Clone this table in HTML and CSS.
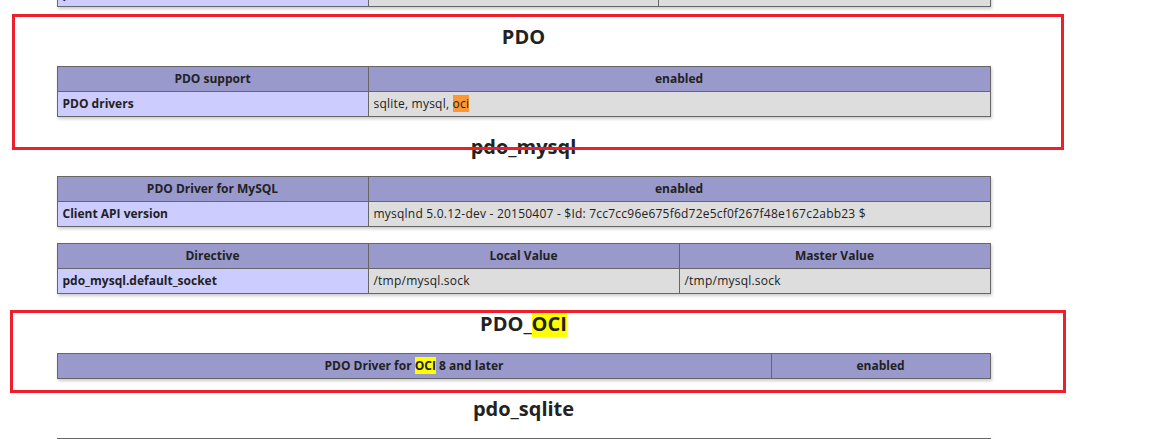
FILE: index.html
```html
<!DOCTYPE html>
<html>
<head>
<meta charset="utf-8">
<title>phpinfo()</title>
<link rel="stylesheet" href="styles.css">
</head>
<body>
<div class="page">
  <div class="center">
    <table class="t-prev">
      <tr><td class="e w-e">pcre.recursion_limit</td><td class="v w-l">100000</td><td class="v">100000</td></tr>
    </table>

    <h2>PDO</h2>
    <table>
      <tr class="h"><th class="w-e">PDO support</th><th>enabled</th></tr>
      <tr><td class="e">PDO drivers</td><td class="v">sqlite, mysql, <span class="hl-active">oci</span></td></tr>
    </table>

    <h2>pdo_mysql</h2>
    <table>
      <tr class="h"><th class="w-e">PDO Driver for MySQL</th><th>enabled</th></tr>
      <tr><td class="e">Client API version</td><td class="v">mysqlnd 5.0.12-dev - 20150407 - $Id: 7cc7cc96e675f6d72e5cf0f267f48e167c2abb23 $</td></tr>
    </table>
    <table>
      <tr class="h"><th class="w-e">Directive</th><th class="w-e">Local Value</th><th>Master Value</th></tr>
      <tr><td class="e">pdo_mysql.default_socket</td><td class="v">/tmp/mysql.sock</td><td class="v">/tmp/mysql.sock</td></tr>
    </table>

    <h2>PDO_<span class="hl">OCI</span></h2>
    <table>
      <tr class="h"><th class="w-oci">PDO Driver for <span class="hl">OCI</span> 8 and later</th><th>enabled</th></tr>
    </table>

    <h2>pdo_sqlite</h2>
    <table>
      <tr class="h"><th class="w-e">PDO Driver for SQLite 3.x</th><th>enabled</th></tr>
      <tr><td class="e">SQLite Library</td><td class="v">3.28.0</td></tr>
    </table>
  </div>
  <div class="mark mark-pdo"></div>
  <div class="mark mark-oci"></div>
</div>
</body>
</html>
```

FILE: styles.css
```css
html, body {
  margin: 0;
  padding: 0;
  background: #fff;
}
body {
  color: #222;
  font-family: "Open Sans", "Noto Sans", "Liberation Sans", sans-serif;
  overflow: hidden;
}
.page {
  position: relative;
  height: 439px;
  overflow: hidden;
}
.center {
  width: 1047px;
  text-align: center;
  margin-top: -35px;
  padding-top: 0;
}
.center table {
  margin: 16px auto;
  text-align: left;
}
table {
  border-collapse: collapse;
  border: 0;
  width: 934px;
  box-shadow: 1px 2px 3px #ccc;
}
td, th {
  border: 1px solid #666;
  font-size: 12px;
  line-height: 16px;
  vertical-align: baseline;
  padding: 4px 5px;
}
th {
  text-align: center;
  font-weight: bold;
}
.h {
  background-color: #99c;
  font-weight: bold;
}
.e {
  background-color: #ccf;
  font-weight: bold;
}
.v {
  background-color: #ddd;
  letter-spacing: 0.22px;
}
.w-e {
  width: 300px;
}
.w-l {
  width: 279px;
}
.w-oci {
  width: 703px;
}
h2 {
  font-size: 20px;
  line-height: 26px;
  font-weight: bold;
  margin: 16.5px 0;
}
.hl {
  background: #ff0;
}
.hl-active {
  background: #ff9632;
}
.mark {
  position: absolute;
  border: 3px solid #ee1f2c;
  box-sizing: border-box;
  pointer-events: none;
}
.mark-pdo {
  left: 12px;
  top: 14px;
  width: 1052px;
  height: 136px;
}
.mark-oci {
  left: 10px;
  top: 310px;
  width: 1056px;
  height: 83px;
}
```
